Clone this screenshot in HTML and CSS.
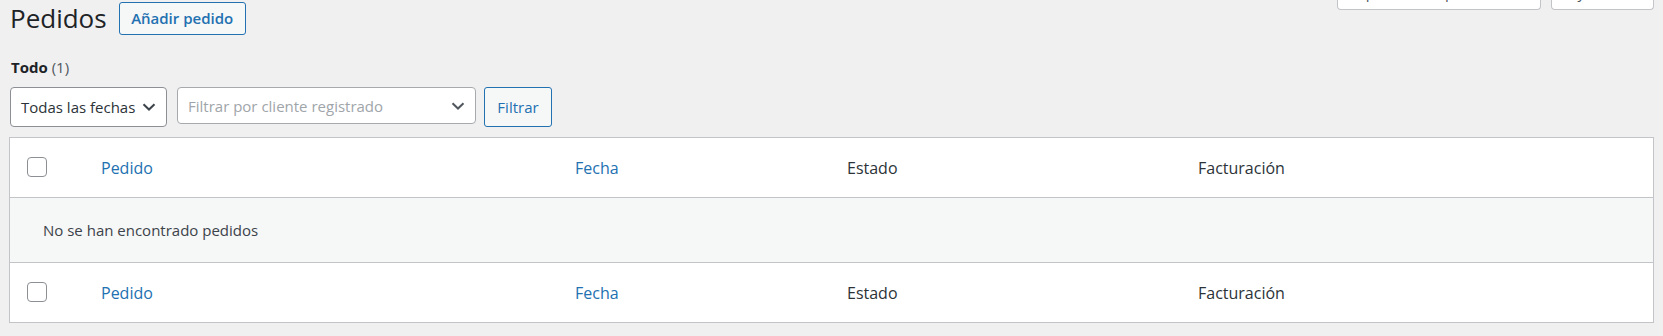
FILE: index.html
```html
<!DOCTYPE html>
<html lang="es">
<head>
<meta charset="utf-8">
<title>Pedidos</title>
<link rel="stylesheet" href="styles.css">
</head>
<body>
<div class="wrap">
  <div class="header">
    <h1 class="title">Pedidos</h1>
    <a class="btn-add" href="#">Añadir pedido</a>
    <div class="screen-meta">
      <button class="meta-tab meta-wide">Opciones de pantalla</button>
      <button class="meta-tab meta-narrow">Ayuda</button>
    </div>
  </div>
  <div class="subsubsub"><strong>Todo</strong> <span class="count">(1)</span></div>
  <div class="filters">
    <div class="select select-date">
      <span>Todas las fechas</span>
      <svg class="chev" width="14" height="8" viewBox="0 0 14 8"><path d="M1.5 1.2 L7 6.5 L12.5 1.2" fill="none" stroke="#3c434a" stroke-width="2"/></svg>
    </div>
    <div class="select select-customer">
      <span class="placeholder">Filtrar por cliente registrado</span>
      <svg class="chev" width="14" height="8" viewBox="0 0 14 8"><path d="M1.5 1.2 L7 6.5 L12.5 1.2" fill="none" stroke="#50575e" stroke-width="2"/></svg>
    </div>
    <button class="btn-filter">Filtrar</button>
  </div>
  <div class="table">
    <div class="row head">
      <div class="cell cb"><span class="checkbox"></span></div>
      <div class="cell"><a href="#">Pedido</a></div>
      <div class="cell"><a href="#">Fecha</a></div>
      <div class="cell">Estado</div>
      <div class="cell">Facturación</div>
    </div>
    <div class="row empty">
      <div class="cell">No se han encontrado pedidos</div>
    </div>
    <div class="row foot">
      <div class="cell cb"><span class="checkbox"></span></div>
      <div class="cell"><a href="#">Pedido</a></div>
      <div class="cell"><a href="#">Fecha</a></div>
      <div class="cell">Estado</div>
      <div class="cell">Facturación</div>
    </div>
  </div>
</div>
</body>
</html>
```
FILE: styles.css
```css
html, body {
  margin: 0;
  padding: 0;
  background: #f0f0f1;
  font-family: "Open Sans", "Noto Sans", sans-serif;
  color: #3c434a;
  overflow: hidden;
}

.wrap {
  padding: 0 9px 0 9px;
}

.header {
  display: flex;
  align-items: flex-start;
  padding-top: 2px;
  height: 33px;
}

.title {
  margin: 0 0 0 1px;
  font-size: 26px;
  line-height: 33px;
  font-weight: 400;
  color: #1d2327;
}

.btn-add {
  margin-left: 12px;
  box-sizing: border-box;
  height: 33px;
  width: 127px;
  border: 1px solid #2271b1;
  border-radius: 3px;
  background: #f6f7f7;
  color: #2271b1;
  font-size: 15px;
  font-weight: 600;
  line-height: 31px;
  text-align: center;
  text-decoration: none;
}

.screen-meta {
  margin-left: auto;
  margin-top: -22px;
  display: flex;
  gap: 10px;
}

.meta-tab {
  box-sizing: border-box;
  height: 30px;
  padding: 0 6px 6px 16px;
  border: 1px solid #c3c4c7;
  border-top: none;
  border-radius: 0 0 4px 4px;
  background: #fff;
  color: #50575e;
  font-family: inherit;
  font-size: 15px;
  line-height: 24px;
  text-align: left;
}

.meta-wide { width: 204px; }
.meta-narrow { width: 103px; }

.subsubsub {
  margin-top: 22px;
  padding-left: 2px;
  font-size: 15px;
  line-height: 20px;
  color: #1d2327;
}

.subsubsub strong { font-weight: 700; }
.subsubsub .count { color: #50575e; }

.filters {
  margin-top: 10px;
  display: flex;
  align-items: flex-start;
  padding-left: 1px;
}

.select {
  box-sizing: border-box;
  display: flex;
  align-items: center;
  justify-content: space-between;
  border: 1px solid #8c8f94;
  border-radius: 4px;
  background: #fff;
  font-size: 15px;
}

.select-date {
  width: 157px;
  height: 40px;
  padding: 0 10px 0 10px;
  color: #2c3338;
}

.select-customer {
  margin-left: 10px;
  width: 299px;
  height: 37px;
  padding: 0 10px 0 10px;
  border-color: #a7aaad;
}

.placeholder { color: #a0a5aa; }

.chev { flex: none; }

.btn-filter {
  margin-left: 8px;
  box-sizing: border-box;
  width: 68px;
  height: 40px;
  border: 1px solid #2271b1;
  border-radius: 3px;
  background: #f6f7f7;
  color: #2271b1;
  font-family: inherit;
  font-size: 15px;
  padding: 0;
}

.table {
  margin-top: 10px;
  border: 1px solid #c3c4c7;
  background: #fff;
}

.row {
  display: grid;
  grid-template-columns: 81px 474px 272px 351px 1fr;
  align-items: center;
  font-size: 16px;
  color: #2c3338;
}

.row.head {
  height: 59px;
  border-bottom: 1px solid #c3c4c7;
}

.row.empty {
  height: 64px;
  background: #f6f7f7;
  border-bottom: 1px solid #c3c4c7;
  grid-template-columns: 1fr;
  font-size: 15px;
  color: #3c434a;
}

.row.empty .cell { padding-left: 33px; }

.row.foot { height: 59px; }

.cell {
  padding-left: 10px;
}

.cell a {
  color: #2271b1;
  text-decoration: none;
}

.cell.cb {
  padding-left: 17px;
  display: flex;
  align-items: center;
}

.checkbox {
  display: block;
  box-sizing: border-box;
  width: 20px;
  height: 20px;
  margin-top: -1px;
  border: 1px solid #8c8f94;
  border-radius: 4px;
  background: #fff;
}
```
